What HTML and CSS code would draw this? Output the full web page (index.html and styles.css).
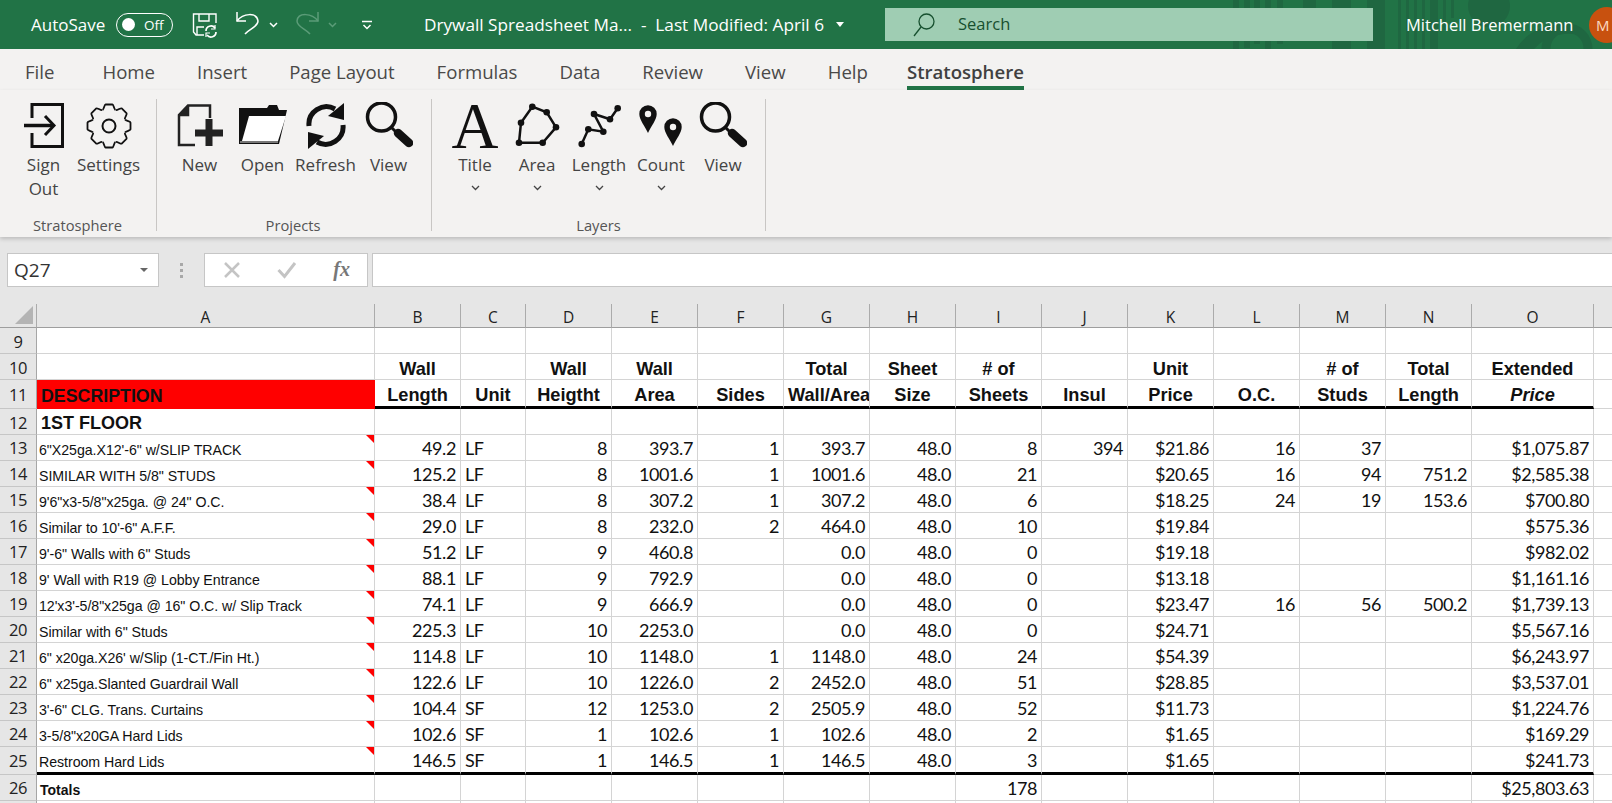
FILE: index.html
```html
<!DOCTYPE html>
<html lang="en">
<head>
<meta charset="utf-8">
<title>Drywall Spreadsheet</title>
<link rel="stylesheet" href="styles.css">
</head>
<body>
<div class="app">
<header class="titlebar">
  <svg class="pattern" width="400" height="49" viewBox="0 0 400 49">
    <g fill="#1f6741">
      <rect x="21" y="0" width="6" height="49"/><rect x="32" y="0" width="6" height="48"/><rect x="42" y="0" width="6" height="44"/><rect x="53" y="0" width="6" height="49"/><rect x="65" y="0" width="6" height="44"/>
      <rect x="91" y="0" width="13" height="12"/><rect x="120" y="0" width="19" height="49"/><rect x="155" y="0" width="18" height="49"/>
      <rect x="186" y="0" width="3" height="49"/><rect x="194" y="0" width="3" height="49"/><rect x="202" y="0" width="3" height="49"/><rect x="210" y="0" width="3" height="49"/><rect x="218" y="0" width="8" height="49"/>
      <rect x="231" y="0" width="3" height="30"/><rect x="239" y="0" width="3" height="18"/>
      <circle cx="277" cy="6" r="21"/>
      <path d="M304 49 A51 51 0 0 1 370 30 V36 A45 45 0 0 0 322 49Z"/>
    </g>
    <circle cx="355" cy="49" r="21" fill="none" stroke="#1f6741" stroke-width="9"/>
  </svg>
  <span class="autosave">AutoSave</span>
  <span class="toggle"><span class="knob"></span><span class="off">Off</span></span>
  <svg class="ti save" width="26" height="26" viewBox="0 0 26 26" fill="none" stroke="#fff" stroke-width="1.4"><path d="M12 23H4L1.500 20V2H24V11"/><path d="M7 2V9H17V2"/><path d="M5 23V15H12"/><path d="M14 19A5 5 0 0 1 23 16M24 20A5 5 0 0 1 15 23" stroke-width="1.700"/><path d="M23 13V17H19M14 25V21H18" stroke-width="1.200"/></svg>
  <svg class="ti undo" width="24" height="26" viewBox="0 0 24 26" fill="none" stroke="#fff" stroke-width="1.500"><path d="M2 2V11H11"/><path d="M2 11C8 3 22 2 23 11C23 17 14 19 10 24"/></svg>
  <svg class="chev" width="9" height="6" viewBox="0 0 9 6" fill="none" stroke="#fff" stroke-width="1.500"><path d="M1 1L4.500 4.500L8 1"/></svg>
  <svg class="ti redo" width="24" height="26" viewBox="0 0 24 26" fill="none" stroke="#5b9c78" stroke-width="1.500"><path d="M22 2V11H13"/><path d="M22 11C16 3 2 2 1 11C1 17 10 19 14 24"/></svg>
  <svg class="chev chev-off" width="9" height="6" viewBox="0 0 9 6" fill="none" stroke="#5b9c78" stroke-width="1.500"><path d="M1 1L4.500 4.500L8 1"/></svg>
  <svg class="qat" width="12" height="10" viewBox="0 0 12 10" fill="none" stroke="#fff" stroke-width="1.500"><path d="M1 1.500H11"/><path d="M2.500 5L6 8.500L9.500 5"/></svg>
  <span class="doc">Drywall Spreadsheet Ma... &nbsp;-&nbsp; Last Modified: April 6</span>
  <span class="caret"></span>
  <div class="search">
    <svg width="24" height="24" viewBox="0 0 24 24" fill="none" stroke="#17502f" stroke-width="1.300"><circle cx="14.500" cy="8.500" r="7.500"/><path d="M9 14L2 23"/></svg>
    <span>Search</span>
  </div>
  <span class="user">Mitchell Bremermann</span>
  <span class="avatar">M</span>
</header>

<nav class="tabs">
  <span>File</span><span class="home">Home</span><span>Insert</span><span>Page Layout</span><span>Formulas</span><span>Data</span><span>Review</span><span>View</span><span>Help</span><span class="active">Stratosphere</span>
</nav>

<section class="ribbon">
  <div class="group g1">
    <div class="btns">
      <div class="btn">
        <svg width="48" height="48" viewBox="0 0 48 48" fill="none" stroke="#111" stroke-width="3"><path d="M12 16V2.500H42.500V44.500H12V31"/><path d="M4 23.500H33" stroke-width="3.500"/><path d="M25 14L34 23.500L25 33" stroke-width="3"/></svg>
        <span class="lbl">Sign<br>Out</span>
      </div>
      <div class="btn">
        <svg width="48" height="48" viewBox="-24 -24 48 48" fill="none" stroke="#111" stroke-width="1.800" stroke-linejoin="round"><defs><path id="tooth" d="M-6.400-16C-5-17-4.500-21.500-3.500-21.500H3.500C4.500-21.500 5-17 6.400-16"/></defs><use href="#tooth"/><use href="#tooth" transform="rotate(45)"/><use href="#tooth" transform="rotate(90)"/><use href="#tooth" transform="rotate(135)"/><use href="#tooth" transform="rotate(180)"/><use href="#tooth" transform="rotate(225)"/><use href="#tooth" transform="rotate(270)"/><use href="#tooth" transform="rotate(315)"/><circle r="6.500" stroke-width="2"/></svg>
        <span class="lbl">Settings</span>
      </div>
    </div>
    <div class="glabel">Stratosphere</div>
  </div>
  <div class="group g2">
    <div class="btns">
      <div class="btn">
        <svg width="48" height="48" viewBox="0 0 48 48" fill="none" stroke="#222" stroke-width="2.500"><path d="M19 43H3V13L12 3.500H34V16"/><path d="M3 13H12V4" fill="#222"/><path d="M33 17V44M19 31H47" stroke="#222" stroke-width="7"/></svg>
        <span class="lbl">New</span>
      </div>
      <div class="btn">
        <svg width="48" height="48" viewBox="0 0 48 48"><path d="M0 6H28L30 3H38L40 8H48L40 42H0Z" fill="#111"/><path d="M10 14H47L39 39H3Z" fill="#fff"/><rect x="1" y="39" width="38" height="2" fill="#777"/></svg>
        <span class="lbl">Open</span>
      </div>
      <div class="btn">
        <svg width="48" height="48" viewBox="0 0 48 48" fill="none" stroke="#111" stroke-width="5"><path d="M7 24A17.500 17.500 0 0 1 33 7"/><path d="M41 23A17.500 17.500 0 0 1 15 40"/><path d="M42 1V18L26 14Z" fill="#111" stroke="none"/><path d="M6 47V30L22 34Z" fill="#111" stroke="none"/></svg>
        <span class="lbl">Refresh</span>
      </div>
      <div class="btn">
        <svg width="48" height="48" viewBox="0 0 48 48" fill="none" stroke="#111"><circle cx="16.500" cy="15" r="14" stroke-width="3.500"/><path d="M26 25L34 33" stroke-width="3"/><path d="M33 31L44 41" stroke-width="8.500" stroke-linecap="round"/></svg>
        <span class="lbl">View</span>
      </div>
    </div>
    <div class="glabel">Projects</div>
  </div>
  <div class="group g3">
    <div class="btns">
      <div class="btn">
        <svg class="titleicon" width="48" height="48" viewBox="0 0 48 48"><text class="bigA" x="24" y="46" text-anchor="middle">A</text></svg>
        <span class="lbl">Title</span>
        <svg class="rchev" width="9" height="6" viewBox="0 0 9 6" fill="none" stroke="#444" stroke-width="1.300"><path d="M1 1L4.500 4.500L8 1"/></svg>
      </div>
      <div class="btn">
        <svg width="48" height="48" viewBox="0 0 48 48" fill="#111" stroke="#111"><path d="M19.300 4.700L33.700 10.300L43 25.300L29.700 40.700H6L8 20.700Z" fill="none" stroke-width="2.500"/><g stroke="none"><circle cx="19.300" cy="4.700" r="3.300"/><circle cx="33.700" cy="10.300" r="3.300"/><circle cx="43" cy="25.300" r="3.300"/><circle cx="29.700" cy="40.700" r="3.300"/><circle cx="6" cy="40.700" r="3.300"/><circle cx="8" cy="20.700" r="3.300"/></g></svg>
        <span class="lbl">Area</span>
        <svg class="rchev" width="9" height="6" viewBox="0 0 9 6" fill="none" stroke="#444" stroke-width="1.300"><path d="M1 1L4.500 4.500L8 1"/></svg>
      </div>
      <div class="btn">
        <svg width="48" height="48" viewBox="0 0 48 48" fill="#111" stroke="#111"><path d="M42.700 6.300L35 17.300L19 12L28.300 29.700L13.300 27.300L6.700 42" fill="none" stroke-width="2.500"/><g stroke="none"><circle cx="42.700" cy="6.300" r="3.300"/><circle cx="35" cy="17.300" r="3.300"/><circle cx="19" cy="12" r="3.300"/><circle cx="28.300" cy="29.700" r="3.300"/><circle cx="13.300" cy="27.300" r="3.300"/><circle cx="6.700" cy="42" r="3.300"/></g></svg>
        <span class="lbl">Length</span>
        <svg class="rchev" width="9" height="6" viewBox="0 0 9 6" fill="none" stroke="#444" stroke-width="1.300"><path d="M1 1L4.500 4.500L8 1"/></svg>
      </div>
      <div class="btn">
        <svg width="48" height="48" viewBox="0 0 48 48"><path d="M2.300 12A8.700 8.700 0 0 1 19.700 12C19.700 18 14 24 11 31C8 24 2.300 18 2.300 12Z" fill="#111"/><circle cx="11" cy="12" r="3.200" fill="#f3f2f1"/><path d="M27.300 25A8.700 8.700 0 0 1 44.700 25C44.700 31 39 37 36 44C33 37 27.300 31 27.300 25Z" fill="#111"/><circle cx="36" cy="25" r="3.200" fill="#f3f2f1"/></svg>
        <span class="lbl">Count</span>
        <svg class="rchev" width="9" height="6" viewBox="0 0 9 6" fill="none" stroke="#444" stroke-width="1.300"><path d="M1 1L4.500 4.500L8 1"/></svg>
      </div>
      <div class="btn">
        <svg width="48" height="48" viewBox="0 0 48 48" fill="none" stroke="#111"><circle cx="16.500" cy="15" r="14" stroke-width="3.500"/><path d="M26 25L34 33" stroke-width="3"/><path d="M33 31L44 41" stroke-width="8.500" stroke-linecap="round"/></svg>
        <span class="lbl">View</span>
      </div>
    </div>
    <div class="glabel">Layers</div>
  </div>
</section>

<section class="formula">
  <div class="namebox"><span>Q27</span><i class="nb-caret"></i></div>
  <div class="grip"><i></i><i></i><i></i></div>
  <div class="fxbtns">
    <svg width="18" height="18" viewBox="0 0 18 18" fill="none" stroke="#c4c4c4" stroke-width="2.500"><path d="M2 2L16 16M16 2L2 16"/></svg>
    <svg width="20" height="18" viewBox="0 0 20 18" fill="none" stroke="#c4c4c4" stroke-width="3"><path d="M1.500 9L7.500 15.500L18 2"/></svg>
    <span class="fx">fx</span>
  </div>
  <div class="fxinput"></div>
</section>

<div class="sheet">
<table>
<colgroup><col class="c-rh"><col class="c-a"><col class="c-b"><col class="c-c"><col class="c-n"><col class="c-n"><col class="c-n"><col class="c-n"><col class="c-n"><col class="c-n"><col class="c-n"><col class="c-n"><col class="c-n"><col class="c-n"><col class="c-n"><col class="c-o"><col class="c-n"></colgroup>
<thead>
<tr class="letters"><th class="corner"></th><th>A</th><th>B</th><th>C</th><th>D</th><th>E</th><th>F</th><th>G</th><th>H</th><th>I</th><th>J</th><th>K</th><th>L</th><th>M</th><th>N</th><th>O</th><th></th></tr>
</thead>
<tbody>
<tr class="r26"><th>9</th><td></td><td></td><td></td><td></td><td></td><td></td><td></td><td></td><td></td><td></td><td></td><td></td><td></td><td></td><td></td><td></td></tr>
<tr class="r26 hd"><th>10</th><td></td><td>Wall</td><td></td><td>Wall</td><td>Wall</td><td></td><td>Total</td><td>Sheet</td><td># of</td><td></td><td>Unit</td><td></td><td># of</td><td>Total</td><td>Extended</td><td></td></tr>
<tr class="r28 hd thick"><th>11</th><td class="red">DESCRIPTION</td><td>Length</td><td>Unit</td><td>Heigtht</td><td>Area</td><td>Sides</td><td>Wall/Area</td><td>Size</td><td>Sheets</td><td>Insul</td><td>Price</td><td>O.C.</td><td>Studs</td><td>Length</td><td><em>Price</em></td><td class="plain"></td></tr>
<tr class="r27"><th>12</th><td class="floor">1ST FLOOR</td><td></td><td></td><td></td><td></td><td></td><td></td><td></td><td></td><td></td><td></td><td></td><td></td><td></td><td></td><td></td></tr>
<tr><th>13</th><td class="d note">6"X25ga.X12'-6" w/SLIP TRACK</td><td>49.2</td><td class="u">LF</td><td>8</td><td>393.7</td><td>1</td><td>393.7</td><td>48.0</td><td>8</td><td>394</td><td>$21.86</td><td>16</td><td>37</td><td></td><td>$1,075.87</td><td></td></tr>
<tr><th>14</th><td class="d note">SIMILAR WITH 5/8" STUDS</td><td>125.2</td><td class="u">LF</td><td>8</td><td>1001.6</td><td>1</td><td>1001.6</td><td>48.0</td><td>21</td><td></td><td>$20.65</td><td>16</td><td>94</td><td>751.2</td><td>$2,585.38</td><td></td></tr>
<tr><th>15</th><td class="d note">9'6"x3-5/8"x25ga. @ 24" O.C.</td><td>38.4</td><td class="u">LF</td><td>8</td><td>307.2</td><td>1</td><td>307.2</td><td>48.0</td><td>6</td><td></td><td>$18.25</td><td>24</td><td>19</td><td>153.6</td><td>$700.80</td><td></td></tr>
<tr><th>16</th><td class="d note">Similar to 10'-6" A.F.F.</td><td>29.0</td><td class="u">LF</td><td>8</td><td>232.0</td><td>2</td><td>464.0</td><td>48.0</td><td>10</td><td></td><td>$19.84</td><td></td><td></td><td></td><td>$575.36</td><td></td></tr>
<tr><th>17</th><td class="d note">9'-6" Walls with 6" Studs</td><td>51.2</td><td class="u">LF</td><td>9</td><td>460.8</td><td></td><td>0.0</td><td>48.0</td><td>0</td><td></td><td>$19.18</td><td></td><td></td><td></td><td>$982.02</td><td></td></tr>
<tr><th>18</th><td class="d note">9' Wall with R19 @ Lobby Entrance</td><td>88.1</td><td class="u">LF</td><td>9</td><td>792.9</td><td></td><td>0.0</td><td>48.0</td><td>0</td><td></td><td>$13.18</td><td></td><td></td><td></td><td>$1,161.16</td><td></td></tr>
<tr><th>19</th><td class="d note">12'x3'-5/8"x25ga @ 16" O.C. w/ Slip Track</td><td>74.1</td><td class="u">LF</td><td>9</td><td>666.9</td><td></td><td>0.0</td><td>48.0</td><td>0</td><td></td><td>$23.47</td><td>16</td><td>56</td><td>500.2</td><td>$1,739.13</td><td></td></tr>
<tr><th>20</th><td class="d note">Similar with 6" Studs</td><td>225.3</td><td class="u">LF</td><td>10</td><td>2253.0</td><td></td><td>0.0</td><td>48.0</td><td>0</td><td></td><td>$24.71</td><td></td><td></td><td></td><td>$5,567.16</td><td></td></tr>
<tr><th>21</th><td class="d note">6" x20ga.X26' w/Slip (1-CT./Fin Ht.)</td><td>114.8</td><td class="u">LF</td><td>10</td><td>1148.0</td><td>1</td><td>1148.0</td><td>48.0</td><td>24</td><td></td><td>$54.39</td><td></td><td></td><td></td><td>$6,243.97</td><td></td></tr>
<tr><th>22</th><td class="d note">6" x25ga.Slanted Guardrail Wall</td><td>122.6</td><td class="u">LF</td><td>10</td><td>1226.0</td><td>2</td><td>2452.0</td><td>48.0</td><td>51</td><td></td><td>$28.85</td><td></td><td></td><td></td><td>$3,537.01</td><td></td></tr>
<tr><th>23</th><td class="d note">3'-6" CLG. Trans. Curtains</td><td>104.4</td><td class="u">SF</td><td>12</td><td>1253.0</td><td>2</td><td>2505.9</td><td>48.0</td><td>52</td><td></td><td>$11.73</td><td></td><td></td><td></td><td>$1,224.76</td><td></td></tr>
<tr><th>24</th><td class="d note">3-5/8"x20GA Hard Lids</td><td>102.6</td><td class="u">SF</td><td>1</td><td>102.6</td><td>1</td><td>102.6</td><td>48.0</td><td>2</td><td></td><td>$1.65</td><td></td><td></td><td></td><td>$169.29</td><td></td></tr>
<tr class="thick last"><th>25</th><td class="d note">Restroom Hard Lids</td><td>146.5</td><td class="u">SF</td><td>1</td><td>146.5</td><td>1</td><td>146.5</td><td>48.0</td><td>3</td><td></td><td>$1.65</td><td></td><td></td><td></td><td>$241.73</td><td class="plain"></td></tr>
<tr class="r26 totals"><th>26</th><td class="tot">Totals</td><td></td><td></td><td></td><td></td><td></td><td></td><td></td><td>178</td><td></td><td></td><td></td><td></td><td></td><td>$25,803.63</td><td></td></tr>
<tr class="r26"><th></th><td></td><td></td><td></td><td></td><td></td><td></td><td></td><td></td><td></td><td></td><td></td><td></td><td></td><td></td><td></td><td></td></tr>
</tbody>
</table>
</div>
</div>
</body>
</html>
```
FILE: styles.css
```css
* { box-sizing: border-box; }
html, body { margin: 0; height: 100%; overflow: hidden; }
body { font-family: "Open Sans", "Noto Sans", sans-serif; background: #fff; color: #222; }
.app { width: 1612px; height: 803px; overflow: hidden; display: flex; flex-direction: column; }

/* title bar */
.titlebar { position: relative; height: 49px; flex: none; background: #217346; color: #fff; display: flex; align-items: center; padding-left: 31px; font-size: 17px; overflow: hidden; }
.pattern { position: absolute; left: 1212px; top: 0; }
.titlebar > *:not(.pattern) { position: relative; flex: none; }
.autosave { width: 76px; white-space: nowrap; }
.toggle { margin-left: 9px; width: 57px; height: 24px; border: 1.5px solid #fff; border-radius: 12px; display: flex; align-items: center; padding-left: 5px; }
.knob { width: 13px; height: 13px; border-radius: 50%; background: #fff; }
.off { font-size: 13.500px; margin-left: 9px; }
.save { margin-left: 19px; }
.undo { margin-left: 17px; margin-top: -3px; }
.chev { margin-left: 10px; }
.redo { margin-left: 18px; margin-top: -3px; }
.chev-off { margin-left: 8px; }
.qat { margin-left: 24px; }
.doc { margin-left: 51px; width: 403px; white-space: nowrap; font-size: 17.200px; margin-top: -1px; }
.caret { margin-left: 9px; width: 0; height: 0; border: 4.500px solid transparent; border-top: 5px solid #fff; border-bottom: 0; }
.search { margin-left: 41px; width: 488px; height: 33px; background: #9fcdb3; display: flex; align-items: center; padding-left: 27px; color: #17502f; }
.search span { margin-left: 22px; font-size: 16.500px; margin-top: -2px; }
.user { margin-left: 33px; width: 167px; white-space: nowrap; font-size: 16.500px; }
.avatar { margin-left: 16px; width: 36px; height: 36px; border-radius: 50%; background: #c8510f; color: #fbd9c2; font-size: 15px; line-height: 36px; padding-left: 7px; }

/* tabs */
.tabs { height: 41px; flex: none; background: #f3f2f1; display: flex; gap: 42px; padding-left: 25px; font-size: 18.600px; color: #4a4948; align-items: flex-start; padding-top: 9px; }
.tabs span { line-height: 27px; height: 32px; white-space: nowrap; }
.tabs .home { margin-left: 6px; }
.tabs .active { font-weight: 600; border-bottom: 4px solid #217346; height: 32px; color: #404040; margin-left: -3px; }

/* ribbon */
.ribbon { position: relative; z-index: 2; height: 147px; flex: none; background: #f3f2f1; display: flex; padding: 9px 0 6px; box-shadow: 0 2px 4px rgba(0,0,0,.18); }
.group { display: flex; flex-direction: column; border-right: 1px solid #c8c6c4; height: 132px; }
.g1 { width: 157px; padding-left: 11px; }
.g2 { width: 275px; padding-left: 11px; }
.g3 { width: 334px; padding-left: 12px; }
.btns { display: flex; padding-top: 3px; flex: 1; }
.btn { display: flex; flex-direction: column; align-items: center; }
.g1 .btn { width: 65px; }
.g2 .btn { width: 63px; }
.g3 .btn { width: 62px; }
.btn > svg:first-child { flex: none; }
.titleicon { overflow: visible; }
.bigA { font-family: "Liberation Serif", serif; font-size: 65px; fill: #111; }
.lbl { font-size: 17px; line-height: 24px; margin-top: 3px; color: #444; text-align: center; white-space: nowrap; }
.rchev { margin-top: 8px; }
.glabel { font-size: 14.700px; line-height: 18px; text-align: center; color: #555; margin-bottom: -3px; }
.g1 .glabel { padding-right: 12px; }
.g2 .glabel { padding-right: 13px; }
.g3 .glabel { padding-right: 12px; }

/* formula bar */
.formula { height: 67px; flex: none; background: #e6e6e6; display: flex; padding-top: 16px; align-items: flex-start; }
.namebox { margin-left: 7px; width: 152px; height: 34px; background: #fff; border: 1px solid #c6c6c6; display: flex; align-items: center; justify-content: space-between; padding: 0 10px 0 6px; font-size: 19px; color: #333; }
.nb-caret { width: 0; height: 0; border: 4px solid transparent; border-top: 4px solid #666; border-bottom: 0; }
.grip { width: 45px; height: 34px; display: flex; flex-direction: column; align-items: center; justify-content: center; gap: 3px; }
.grip i { width: 3px; height: 3px; background: #a8a8a8; }
.fxbtns { width: 164px; height: 34px; background: #fff; border: 1px solid #c6c6c6; display: flex; align-items: center; justify-content: space-between; padding: 0 17px 0 18px; }
.fx { font-family: "Liberation Serif", serif; font-style: italic; font-weight: 700; font-size: 20px; color: #777; margin-top: -2px; }
.fxinput { margin-left: 4px; flex: 1; height: 34px; background: #fff; border: 1px solid #c6c6c6; border-right: 0; }

/* sheet */
.sheet { flex: 1; overflow: hidden; background: #fff; }
table { border-collapse: separate; border-spacing: 0; table-layout: fixed; width: 1680px; font-family: Lato, "Liberation Sans", sans-serif; font-size: 18px; color: #111; }
.c-rh { width: 37px; } .c-a { width: 338px; } .c-b { width: 86px; } .c-c { width: 65px; } .c-n { width: 86px; } .c-o { width: 122px; }
th, td { padding: 0 4px; white-space: nowrap; overflow: hidden; font-weight: 400; line-height: 1; }
td { position: relative; border-right: 1px solid #d4d4d4; border-bottom: 1px solid #d4d4d4; text-align: right; letter-spacing: -.4px; height: 26px; vertical-align: middle; padding-top: 1px; }
tbody th { background: #e6e6e6; border-right: 1px solid #a6a6a6; border-bottom: 1px solid #c6c6c6; font-family: "Open Sans", sans-serif; font-size: 16.500px; text-align: center; color: #222; padding: 3px 0 0; height: 26px; letter-spacing: -.4px; }
.letters th { height: 24px; background: #e6e6e6; border-right: 1px solid #ababab; border-bottom: 1px solid #9e9e9e; font-family: "Open Sans", sans-serif; font-size: 15.500px; color: #222; text-align: center; padding: 4px 0 0; }
.corner { position: relative; }
.corner::after { content: ""; position: absolute; right: 3px; bottom: 3px; border-style: solid; border-width: 0 0 18px 18px; border-color: transparent transparent #b4b4b4 transparent; }
.r26 td, .r26 th { height: 26px; }
.r27 td, .r27 th { height: 25.500px; }
.r28 td, .r28 th { height: 29px; }
.last td, .last th { height: 28px; }
.hd td { font-family: "Liberation Sans", sans-serif; font-weight: 700; font-size: 18.200px; letter-spacing: 0; text-align: center; padding-top: 5px; }
.hd em { font-style: italic; }
.thick td { border-bottom: 3px solid #000; }
.thick td.plain { border-bottom-color: #d4d4d4; border-bottom-width: 1px; }
td.red { background: #ff0000; text-align: left; border-bottom: 0; border-right: 0; font-size: 17.800px; }
td.floor { font-family: "Liberation Sans", sans-serif; font-weight: 700; font-size: 18px; letter-spacing: 0; text-align: left; padding-top: 3px; }
td.tot { font-family: "Liberation Sans", sans-serif; font-weight: 700; font-size: 14px; letter-spacing: 0; text-align: left; padding-top: 6px; padding-left: 3px; }
td.d { font-family: "Liberation Sans", sans-serif; font-size: 14.200px; letter-spacing: -.05px; text-align: left; padding: 6px 0 0 2px; }
td.u { text-align: left; }
td.note::after { content: ""; position: absolute; right: 0; top: 0; border-style: solid; border-width: 8px 8px 0 0; border-color: #ff0000 transparent transparent transparent; transform: scaleX(-1); }
```
